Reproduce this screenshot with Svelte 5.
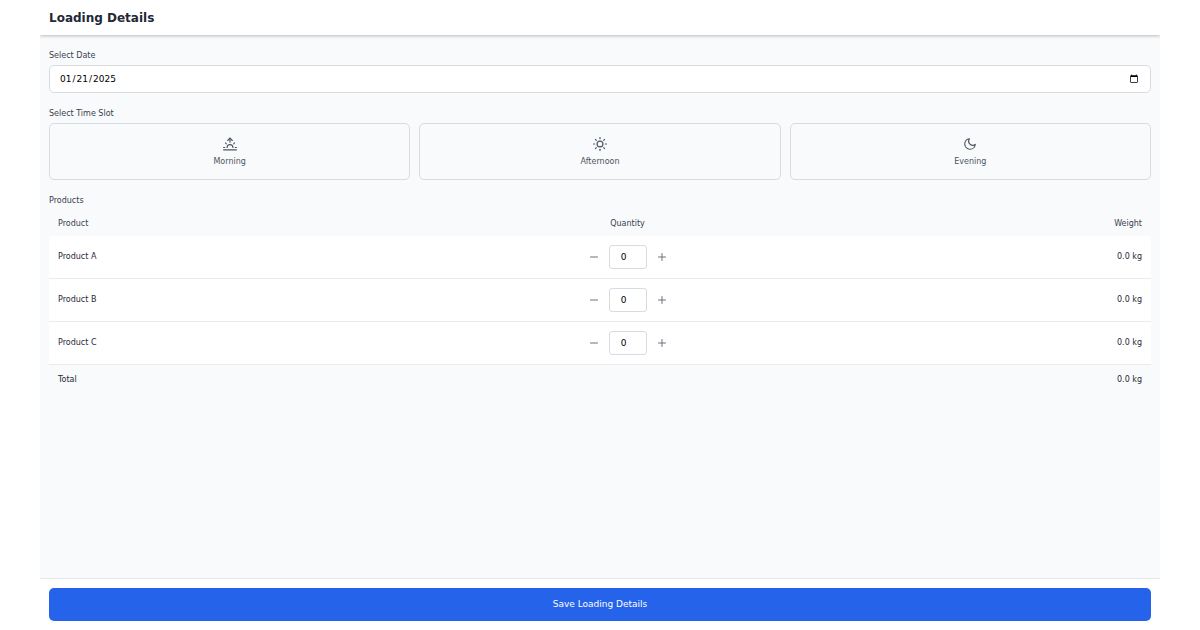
<script lang="ts">
  type Product = { name: string; unit: number; quantity: number };

  let date = $state('2025-01-21');
  let slot = $state('');
  let products = $state<Product[]>([
    { name: 'Product A', unit: 1, quantity: 0 },
    { name: 'Product B', unit: 1, quantity: 0 },
    { name: 'Product C', unit: 1, quantity: 0 }
  ]);
  const total = $derived(products.reduce((sum, p) => sum + p.quantity * p.unit, 0));

  const slots = [
    {
      name: 'Morning',
      paths: ['M17 18a5 5 0 0 0-10 0', 'M12 2v7', 'M4.22 10.22l1.42 1.42', 'M1 18h2', 'M21 18h2', 'M18.36 11.64l1.42-1.42', 'M23 22H1', 'M8 6l4-4 4 4']
    },
    {
      name: 'Afternoon',
      paths: ['M17 12a5 5 0 1 1-10 0 5 5 0 0 1 10 0', 'M12 1v2', 'M12 21v2', 'M4.22 4.22l1.42 1.42', 'M18.36 18.36l1.42 1.42', 'M1 12h2', 'M21 12h2', 'M4.22 19.78l1.42-1.42', 'M18.36 5.64l1.42-1.42']
    },
    { name: 'Evening', paths: ['M21 12.79A9 9 0 1 1 11.21 3 7 7 0 0 0 21 12.79z'] }
  ];

  function step(product: Product, change: number) {
    product.quantity = Math.max(0, product.quantity + change);
  }
</script>

{#snippet icon(paths: string[])}
  <svg viewBox="0 0 24 24" aria-hidden="true">
    {#each paths as d}<path {d} />{/each}
  </svg>
{/snippet}

<div class="page">
  <header><h1>Loading Details</h1></header>

  <main>
    <section>
      <label class="label" for="date">Select Date</label>
      <input id="date" class="date" type="date" bind:value={date} />
    </section>

    <section>
      <h2 class="label">Select Time Slot</h2>
      <div class="slots">
        {#each slots as s}
          <button class="slot" class:selected={slot === s.name} aria-pressed={slot === s.name} onclick={() => (slot = s.name)}>
            {@render icon(s.paths)}
            <span>{s.name}</span>
          </button>
        {/each}
      </div>
    </section>

    <section>
      <h2 class="label">Products</h2>
      <table>
        <thead>
          <tr><th class="name">Product</th><th class="quantity">Quantity</th><th class="weight">Weight</th></tr>
        </thead>
        <tbody>
          {#each products as product}
            <tr>
              <td>{product.name}</td>
              <td>
                <div class="stepper">
                  <button aria-label="Decrease {product.name}" onclick={() => step(product, -1)}>{@render icon(['M5 12h14'])}</button>
                  <input type="number" min="0" aria-label="{product.name} quantity" bind:value={product.quantity} />
                  <button aria-label="Increase {product.name}" onclick={() => step(product, 1)}>{@render icon(['M5 12h14', 'M12 5v14'])}</button>
                </div>
              </td>
              <td class="weight">{(product.quantity * product.unit).toFixed(1)} kg</td>
            </tr>
          {/each}
        </tbody>
        <tfoot>
          <tr><td>Total</td><td></td><td class="weight">{total.toFixed(1)} kg</td></tr>
        </tfoot>
      </table>
    </section>
  </main>

  <footer><button class="save">Save Loading Details</button></footer>
</div>

<style>
  :global(body) {
    background: #fff;
  }
  .page,
  .page * {
    box-sizing: border-box;
  }
  .page {
    display: flex;
    flex-direction: column;
    min-height: 100vh;
    margin: 0 40px;
    overflow-x: clip;
    background: #f9fafb;
    color: #1f2937;
    font: 8px/12px 'DejaVu Sans', sans-serif;
  }
  button,
  input {
    font-family: inherit;
    margin: 0;
  }
  button {
    cursor: pointer;
  }
  svg {
    display: block;
    fill: none;
    stroke: currentColor;
    stroke-width: 2;
    stroke-linecap: round;
    stroke-linejoin: round;
  }
  header {
    padding: 10px 9px 8px;
    background: #fff;
    box-shadow: 0 1px 3px rgb(0 0 0 / 0.25);
  }
  h1 {
    margin: 0;
    font-size: 12px;
    line-height: 17px;
    font-weight: 700;
  }
  main {
    flex: 1;
    display: flex;
    flex-direction: column;
    gap: 15px;
    padding: 15px 9px;
  }
  .label {
    display: block;
    margin: 0 0 3px;
    color: #374151;
    font-size: 8px;
    font-weight: 400;
    line-height: 12px;
  }
  .date {
    display: block;
    width: 100%;
    height: 28px;
    padding: 0 9px;
    border: 1px solid #d8dbe0;
    border-radius: 5px;
    background: #fff;
    color: #000;
    font-size: 9px;
  }
  .date::-webkit-calendar-picker-indicator {
    width: 10px;
    height: 10px;
  }
  .slots {
    display: grid;
    grid-template-columns: repeat(3, 1fr);
    gap: 9px;
  }
  .slot {
    display: flex;
    flex-direction: column;
    align-items: center;
    gap: 5px;
    padding: 13px 9px 11px;
    border: 1px solid #d8dbe0;
    border-radius: 5px;
    background: transparent;
    color: #4b5563;
    font-size: 8px;
    line-height: 12px;
  }
  .slot.selected {
    border-color: #2563eb;
    background: #eff6ff;
    color: #2563eb;
  }
  .slot svg {
    width: 14px;
    height: 14px;
  }
  table {
    width: 100%;
    border-collapse: collapse;
    table-layout: fixed;
  }
  th {
    padding: 8px 9px 6px;
    color: #374151;
    font-weight: 400;
    text-align: left;
  }
  td {
    padding: 9px;
  }
  .name {
    width: 36%;
  }
  th.quantity {
    width: 33%;
    text-align: center;
  }
  .weight {
    text-align: right;
  }
  tbody tr {
    background: #fff;
    border-bottom: 1px solid #e9ebee;
  }
  .stepper {
    display: flex;
    align-items: center;
    justify-content: center;
    gap: 7px;
  }
  .stepper button {
    padding: 2px;
    border: 0;
    background: none;
    color: #6b7280;
  }
  .stepper svg {
    width: 12px;
    height: 12px;
  }
  .stepper input {
    width: 38px;
    height: 24px;
    padding: 0 8px 0 0;
    border: 1px solid #d8dbe0;
    border-radius: 3px;
    background: #fff;
    color: #000;
    font-size: 9px;
    text-align: center;
    appearance: textfield;
  }
  .stepper input::-webkit-inner-spin-button {
    display: none;
  }
  footer {
    padding: 9px;
    border-top: 1px solid #e5e7eb;
    background: #fff;
  }
  .save {
    display: block;
    width: 100%;
    padding: 9px;
    border: 0;
    border-radius: 5px;
    background: #2563eb;
    color: #fff;
    font-size: 9px;
    line-height: 15px;
  }
</style>
